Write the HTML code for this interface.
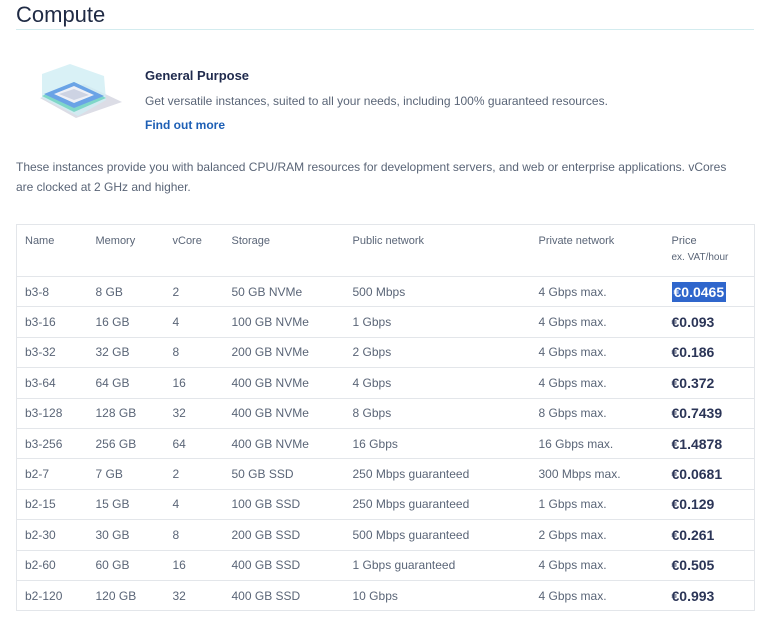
<!DOCTYPE html>
<html><head><meta charset="utf-8"><style>
body{margin:0;width:768px;height:620px;background:#fff;font-family:"Liberation Sans",sans-serif;color:#4f5b6e;overflow:hidden;position:relative}
.t{position:absolute;left:16px;top:2px;font-size:22px;color:#1f2a44}
.hr{position:absolute;left:16px;top:29px;width:738px;height:1px;background:#d3ecef}
.gp{position:absolute;left:145px;top:68px;font-size:13px;font-weight:bold;color:#1f2a4d}
.d{position:absolute;left:145px;top:94px;font-size:12px;color:#5a6577}
.f{position:absolute;left:145px;top:118px;font-size:12px;font-weight:bold;color:#1d5fb5}
.p{position:absolute;left:16px;top:157px;width:715px;font-size:12px;line-height:20px;color:#5a6577}
table{position:absolute;left:16px;top:224px;width:739px;border-collapse:collapse;border:1px solid #e3e6ea;font-size:12px}
td{border-top:1px solid #e3e6ea;height:29.4px;padding:0 0 0 8px;color:#5a6577}
th{text-align:left;font-weight:normal;font-size:11px;color:#5a6577;height:52px;vertical-align:top;padding:10px 0 0 8px;box-sizing:border-box}
td.pr{font-weight:bold;font-size:14px;color:#2b3557}
.sel{background:#2f66cc;color:#fff;padding:2px 2px}
</style></head><body>
<div class="t">Compute</div><div class="hr"></div>
<svg style="position:absolute;left:34px;top:60px" width="90" height="78" viewBox="0 0 90 78">
<path d="M6 38 L42 58 L88 42 L50 24 Z" fill="#dcdde6"/>
<path d="M8 14 L36 4 L70 16 L72 40 L44 56 L8 38 Z" fill="#cfeef4" opacity=".8"/>
<path d="M8 36 L40 52 L72 38 L40 22 Z" fill="#7fd7c8"/>
<path d="M10 34 L40 48 L70 36 L40 22 Z" fill="#6aa3e6"/>
<path d="M20 34 L40 43 L60 35 L40 26 Z" fill="#eef0f6"/>
<path d="M25 34 L40 40 L55 35 L40 29 Z" fill="#cdd3e3"/>
</svg>
<div class="gp">General Purpose</div>
<div class="d">Get versatile instances, suited to all your needs, including 100% guaranteed resources.</div>
<div class="f">Find out more</div>
<div class="p">These instances provide you with balanced CPU/RAM resources for development servers, and web or enterprise applications. vCores are clocked at 2 GHz and higher.</div>
<table>
<colgroup><col style="width:71px"><col style="width:77px"><col style="width:59px"><col style="width:121px"><col style="width:186px"><col style="width:133px"><col></colgroup>
<tr><th>Name</th><th>Memory</th><th>vCore</th><th>Storage</th><th>Public network</th><th>Private network</th><th>Price<br><span style="font-size:10px;line-height:22px">ex. VAT/hour</span></th></tr>
<tr><td>b3-8</td><td>8 GB</td><td>2</td><td>50 GB NVMe</td><td>500 Mbps</td><td>4 Gbps max.</td><td class="pr"><span class="sel">€0.0465</span></td></tr>
<tr><td>b3-16</td><td>16 GB</td><td>4</td><td>100 GB NVMe</td><td>1 Gbps</td><td>4 Gbps max.</td><td class="pr">€0.093</td></tr>
<tr><td>b3-32</td><td>32 GB</td><td>8</td><td>200 GB NVMe</td><td>2 Gbps</td><td>4 Gbps max.</td><td class="pr">€0.186</td></tr>
<tr><td>b3-64</td><td>64 GB</td><td>16</td><td>400 GB NVMe</td><td>4 Gbps</td><td>4 Gbps max.</td><td class="pr">€0.372</td></tr>
<tr><td>b3-128</td><td>128 GB</td><td>32</td><td>400 GB NVMe</td><td>8 Gbps</td><td>8 Gbps max.</td><td class="pr">€0.7439</td></tr>
<tr><td>b3-256</td><td>256 GB</td><td>64</td><td>400 GB NVMe</td><td>16 Gbps</td><td>16 Gbps max.</td><td class="pr">€1.4878</td></tr>
<tr><td>b2-7</td><td>7 GB</td><td>2</td><td>50 GB SSD</td><td>250 Mbps guaranteed</td><td>300 Mbps max.</td><td class="pr">€0.0681</td></tr>
<tr><td>b2-15</td><td>15 GB</td><td>4</td><td>100 GB SSD</td><td>250 Mbps guaranteed</td><td>1 Gbps max.</td><td class="pr">€0.129</td></tr>
<tr><td>b2-30</td><td>30 GB</td><td>8</td><td>200 GB SSD</td><td>500 Mbps guaranteed</td><td>2 Gbps max.</td><td class="pr">€0.261</td></tr>
<tr><td>b2-60</td><td>60 GB</td><td>16</td><td>400 GB SSD</td><td>1 Gbps guaranteed</td><td>4 Gbps max.</td><td class="pr">€0.505</td></tr>
<tr><td>b2-120</td><td>120 GB</td><td>32</td><td>400 GB SSD</td><td>10 Gbps</td><td>4 Gbps max.</td><td class="pr">€0.993</td></tr>
</table>
</body></html>
